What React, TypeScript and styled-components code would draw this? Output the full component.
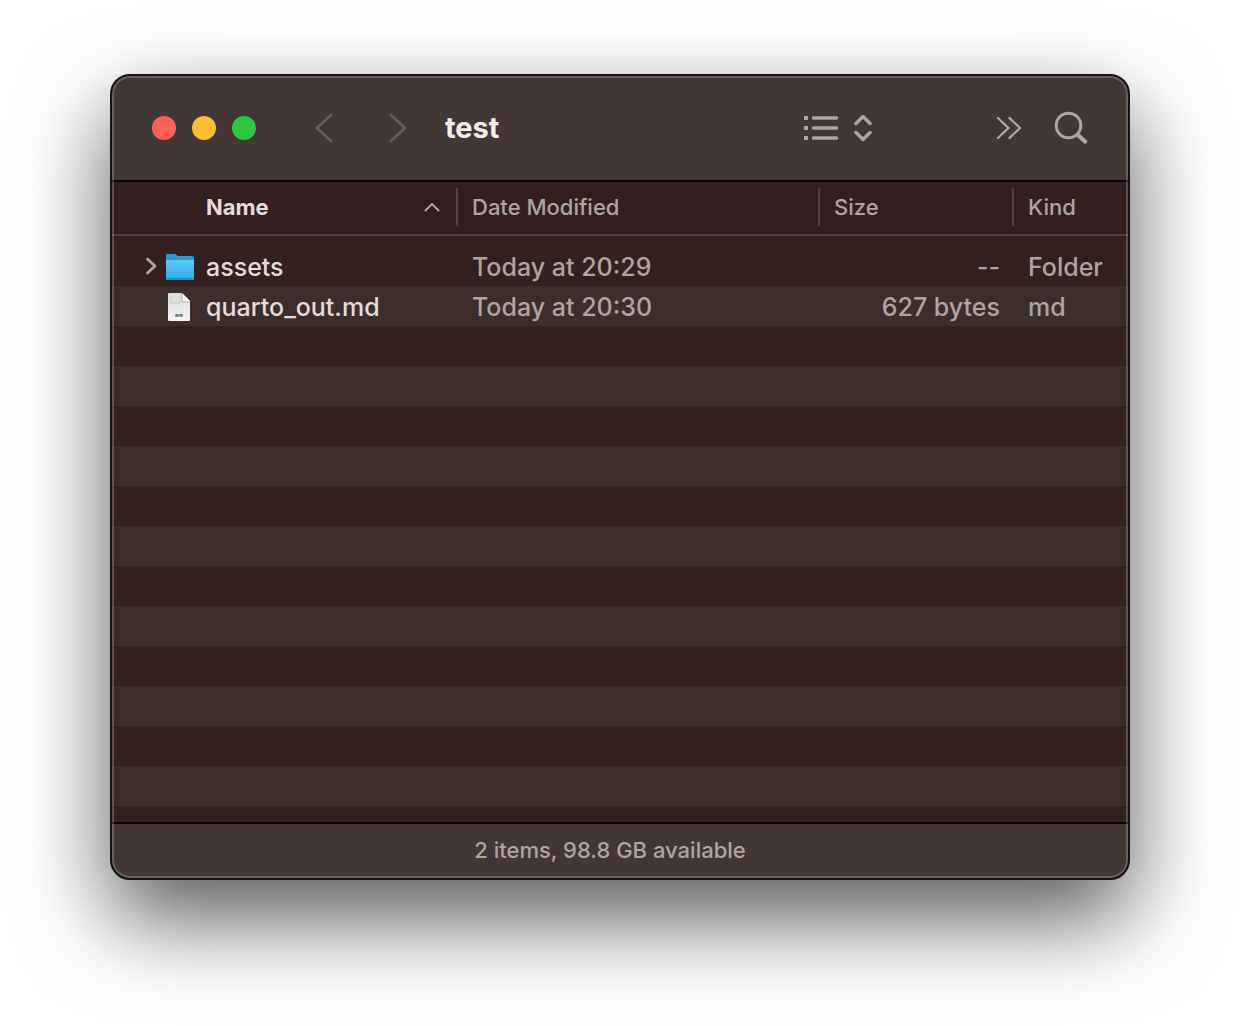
import React from 'react';
import styled, { createGlobalStyle } from 'styled-components';

const color = {
  chrome: '#433735',
  header: '#331f20',
  rowDark: '#33211f',
  rowLight: '#3d2e2b',
  line: '#514140',
  text: '#e2dddc',
  muted: '#aea4a2',
};

const GlobalStyle = createGlobalStyle`
  * { box-sizing: border-box; }
  body {
    margin: 0;
    background: #fff;
    font-family: Inter, "Liberation Sans", sans-serif;
  }
`;

const Desktop = styled.main`
  display: flex;
  min-height: 100vh;
  padding: 74px 110px 146px;
`;

const Window = styled.section`
  position: relative;
  display: flex;
  flex-direction: column;
  flex: 1;
  min-width: 0;
  overflow: hidden;
  border: 2px solid #151313;
  border-radius: 20px;
  background: ${color.chrome};
  box-shadow: 0 38px 90px rgba(0, 0, 0, 0.66);

  &::after {
    content: '';
    position: absolute;
    inset: 0;
    border: 2px solid rgba(255, 255, 255, 0.2);
    border-radius: 18px;
    pointer-events: none;
  }
`;

const Toolbar = styled.header`
  display: flex;
  align-items: center;
  height: 106px;
  padding: 0 40px;
  border-bottom: 2px solid #050303;
`;

const Group = styled.div<{ $gap: number }>`
  display: flex;
  align-items: center;
  gap: ${(p) => p.$gap}px;
`;

const PlainButton = styled.button<{ $color?: string }>`
  display: flex;
  padding: 0;
  border: 0;
  background: none;
  color: ${(p) => p.$color ?? color.muted};
`;

const Light = styled.button<{ $fill: string }>`
  width: 24px;
  height: 24px;
  padding: 0;
  border: 0;
  border-radius: 50%;
  background: ${(p) => p.$fill};
`;

const Navigation = styled(Group)`
  margin-left: 59px;
`;

const Title = styled.h1`
  flex: 1;
  margin: 0 0 0 38px;
  color: #f3efee;
  font-size: 29px;
  font-weight: 700;
  line-height: 32px;
`;

const Actions = styled(Group)`
  margin-left: 124px;
`;

const List = styled.div`
  flex: 1;
  background:
    linear-gradient(${color.rowDark}, ${color.rowDark}) 0 0 / 100% 64px no-repeat,
    repeating-linear-gradient(${color.rowDark} 0 40px, ${color.rowLight} 40px 80px) 0 64px / 100% 80px;
`;

const Table = styled.table`
  width: 100%;
  table-layout: fixed;
  border-collapse: separate;
  border-spacing: 0;

  tbody::before {
    content: '';
    display: block;
    height: 10px;
  }
`;

const Column = styled.col<{ $width?: number }>`
  width: ${(p) => (p.$width ? `${p.$width}px` : 'auto')};
`;

const Heading = styled.th`
  height: 54px;
  padding: 0 0 2px;
  border-bottom: 2px solid ${color.line};
  background: ${color.header};
  color: ${color.muted};
  font-size: 22px;
  font-weight: 500;
  line-height: 38px;
  text-align: left;
  vertical-align: middle;
`;

const HeadingLabel = styled.div<{ $first?: boolean; $last?: boolean }>`
  display: flex;
  align-items: center;
  justify-content: space-between;
  height: 38px;
  padding: ${(p) => (p.$first ? '0 16px 0 94px' : '0 14px')};
  border-right: ${(p) => (p.$last ? '0' : `2px solid ${color.line}`)};
  color: ${(p) => (p.$first ? color.text : 'inherit')};
  font-weight: ${(p) => (p.$first ? 700 : 500)};
  line-height: 36px;
`;

const Cell = styled.td<{ $right?: boolean }>`
  height: 40px;
  padding: 2px 14px 0;
  color: ${color.muted};
  font-size: 25px;
  font-weight: 500;
  line-height: 38px;
  text-align: ${(p) => (p.$right ? 'right' : 'left')};
  white-space: nowrap;
`;

const NameCell = styled(Cell)`
  padding: 2px 0 0 32px;
  color: ${color.text};
`;

const FileName = styled.div`
  display: grid;
  grid-template-columns: 14px 32px auto;
  column-gap: 8px;
  align-items: center;
  justify-content: start;
`;

const StatusBar = styled.footer`
  height: 56px;
  padding: 0 20px 0 0;
  border-top: 2px solid #050303;
  color: ${color.muted};
  font-size: 22px;
  font-weight: 500;
  line-height: 52px;
  text-align: center;
`;

const Drawing = styled.svg`
  display: block;
  fill: none;
  stroke: currentColor;
  stroke-linecap: round;
  stroke-linejoin: round;
`;

const Chevron = ({ back }: { back?: boolean }) => (
  <Drawing width="18" height="30" viewBox="0 0 18 30" strokeWidth="2.6">
    <path d={back ? 'M16 2L2 15l14 13' : 'M2 2l14 13L2 28'} />
  </Drawing>
);

const ListIcon = () => (
  <Drawing width="34" height="26" viewBox="0 0 34 26" strokeWidth="3.4">
    <path d="M9.5 3H32.5M9.5 13H32.5M9.5 23H32.5" />
    <path d="M0 3h4M0 13h4M0 23h4" strokeWidth="4" strokeLinecap="butt" />
  </Drawing>
);

const UpDownIcon = () => (
  <Drawing width="18" height="28" viewBox="0 0 18 28" strokeWidth="3.4">
    <path d="M2 9.5L9 2.5l7 7M2 18.500l7 7 7-7" />
  </Drawing>
);

const MoreIcon = () => (
  <Drawing width="26" height="24" viewBox="0 0 26 24" strokeWidth="2.4">
    <path d="M2 2l10.500 10L2 22M13.500 2L24 12 13.500 22" />
  </Drawing>
);

const SearchIcon = () => (
  <Drawing width="34" height="34" viewBox="0 0 34 34" strokeWidth="3">
    <circle cx="14.500" cy="14.500" r="12.300" />
    <path d="M24 24l7 6.500" strokeWidth="4.4" />
  </Drawing>
);

const SortIcon = () => (
  <Drawing width="16" height="10" viewBox="0 0 16 10" strokeWidth="2" color={color.muted}>
    <path d="M1.500 8.500L8 2l6.500 6.500" />
  </Drawing>
);

const DisclosureIcon = () => (
  <Drawing width="14" height="20" viewBox="0 0 14 20" strokeWidth="2.8" color={color.muted}>
    <path d="M3.500 2l7.500 7-7.500 7" />
  </Drawing>
);

const FolderIcon = () => (
  <svg width="28" height="30" viewBox="2 0 28 30">
    <defs>
      <linearGradient id="folder" x1="0" y1="0" x2="0" y2="1">
        <stop offset="0" stopColor="#5bcbf8" />
        <stop offset="1" stopColor="#2daae7" />
      </linearGradient>
    </defs>
    <path d="M2 3q0-1 1-1h8l3 2h14q2 0 2 2v4H2z" fill="#229bd6" />
    <path d="M2 8h28v19q0 1-1 1H3q-1 0-1-1z" fill="url(#folder)" />
    <path d="M2 26h28v1q0 1-1 1H3q-1 0-1-1z" fill="#1e91ca" />
  </svg>
);

const DocumentIcon = () => (
  <svg width="28" height="32" viewBox="2 0 28 32">
    <defs>
      <linearGradient id="paper" x1="0" y1="0" x2="0" y2="1">
        <stop offset="0" stopColor="#dfdedd" />
        <stop offset="0.45" stopColor="#e6e5e5" />
        <stop offset="1" stopColor="#f6f6f6" />
      </linearGradient>
    </defs>
    <path d="M4 3q0-1 1-1h13l8 8v19q0 1-1 1H5q-1 0-1-1z" fill="url(#paper)" />
    <path d="M7 5v7h9V5" fill="none" stroke="#c9c7c6" />
    <path d="M18 2l8 8v1h-6q-2 0-2-2z" fill="#fff" />
    <path d="M18 2v7q0 2 2 2h6" fill="none" stroke="#aaa8a7" />
    <path d="M11 24.500h8" stroke="#a09e9d" strokeWidth="3" />
    <path d="M12 24h2M16 24h2" stroke="#777" strokeWidth="2" />
  </svg>
);

type Item = { name: string; modified: string; size: string; kind: string };

const items: Item[] = [
  { name: 'assets', modified: 'Today at 20:29', size: '--', kind: 'Folder' },
  { name: 'quarto_out.md', modified: 'Today at 20:30', size: '627 bytes', kind: 'md' },
];

export default function App() {
  return (
    <>
      <GlobalStyle />
      <Desktop>
        <Window aria-label="test">
          <Toolbar>
            <Group $gap={16}>
              <Light $fill="#ff5f57" aria-label="Close" />
              <Light $fill="#febc2e" aria-label="Minimize" />
              <Light $fill="#28c840" aria-label="Zoom" />
            </Group>
            <Navigation $gap={56}>
              <PlainButton $color="#685b59" aria-label="Back"><Chevron back /></PlainButton>
              <PlainButton $color="#685b59" aria-label="Forward"><Chevron /></PlainButton>
            </Navigation>
            <Title>test</Title>
            <PlainButton aria-label="View as list">
              <Group $gap={16}>
                <ListIcon />
                <UpDownIcon />
              </Group>
            </PlainButton>
            <Actions $gap={32}>
              <PlainButton aria-label="More"><MoreIcon /></PlainButton>
              <PlainButton aria-label="Search"><SearchIcon /></PlainButton>
            </Actions>
          </Toolbar>
          <List>
            <Table>
              <colgroup>
                <Column $width={346} />
                <Column />
                <Column $width={194} />
                <Column $width={114} />
              </colgroup>
              <thead>
                <tr>
                  <Heading aria-sort="ascending">
                    <HeadingLabel $first>Name<SortIcon /></HeadingLabel>
                  </Heading>
                  <Heading><HeadingLabel>Date Modified</HeadingLabel></Heading>
                  <Heading><HeadingLabel>Size</HeadingLabel></Heading>
                  <Heading><HeadingLabel $last>Kind</HeadingLabel></Heading>
                </tr>
              </thead>
              <tbody>
                {items.map((item) => {
                  const folder = item.kind === 'Folder';
                  return (
                    <tr key={item.name}>
                      <NameCell>
                        <FileName>
                          {folder ? (
                            <PlainButton aria-label="Expand assets"><DisclosureIcon /></PlainButton>
                          ) : (
                            <span />
                          )}
                          {folder ? <FolderIcon /> : <DocumentIcon />}
                          <span>{item.name}</span>
                        </FileName>
                      </NameCell>
                      <Cell>{item.modified}</Cell>
                      <Cell $right>{item.size}</Cell>
                      <Cell>{item.kind}</Cell>
                    </tr>
                  );
                })}
              </tbody>
            </Table>
          </List>
          <StatusBar>2 items, 98.8 GB available</StatusBar>
        </Window>
      </Desktop>
    </>
  );
}
